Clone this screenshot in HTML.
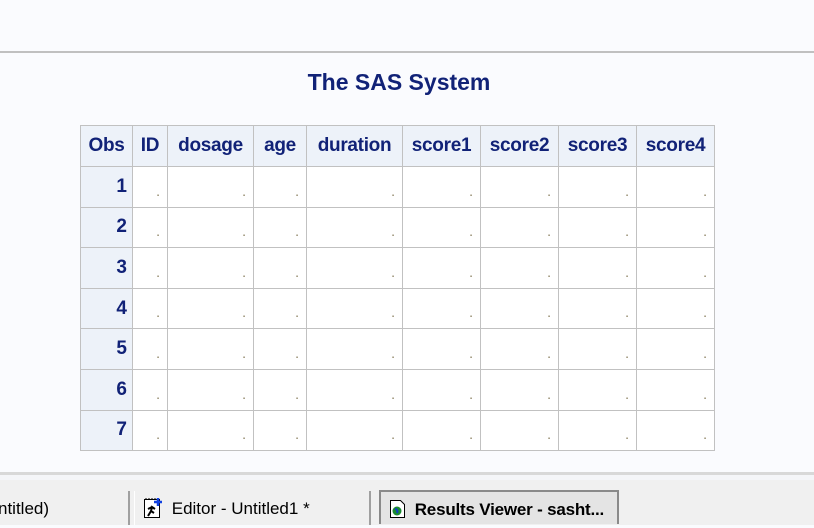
<!DOCTYPE html>
<html><head><style>
body{margin:0;width:814px;height:525px;background:#fafbfe;font-family:"Liberation Sans",Arial,sans-serif;position:relative;overflow:hidden}
.hl{position:absolute;left:0;width:814px;top:51px;height:2px;background:#c0c0c0}
.title{position:absolute;left:0;width:798px;top:69px;text-align:center;color:#112277;font-weight:bold;font-size:23px}
table{position:absolute;left:80px;top:125px;border-collapse:collapse;table-layout:fixed}
td,th{border:1px solid #c1c1c1;padding:0 5px;}
th{background:#edf2f9;color:#112277;font-size:19px;font-weight:bold;height:40px;text-align:center;letter-spacing:-0.3px}
td{height:40.6px;background:#fff;text-align:right;vertical-align:bottom;color:#8a8060;font-size:14px;padding-bottom:8px;padding-right:7px;box-sizing:border-box}
td.o{background:#edf2f9;color:#112277;font-size:19px;font-weight:bold;vertical-align:middle;padding-bottom:0;padding-right:5px}
.b1{position:absolute;left:0;top:472px;width:814px;height:3px;background:#d8d8d8}
.b2{position:absolute;left:0;top:475px;width:814px;height:5px;background:#f4f5f8}
.bar{position:absolute;left:0;top:480px;width:814px;height:45px;background:#f0f0f0}
.tab{position:absolute;top:491px;height:34px;font-size:17px;color:#000;line-height:36px}
</style></head><body>
<div class="hl"></div>
<div class="title">The SAS System</div>
<table>
<colgroup><col style="width:52px"><col style="width:35px"><col style="width:86px"><col style="width:53px"><col style="width:96px"><col style="width:78px"><col style="width:78px"><col style="width:78px"><col style="width:78px"></colgroup>
<tr><th>Obs</th><th>ID</th><th>dosage</th><th>age</th><th>duration</th><th>score1</th><th>score2</th><th>score3</th><th>score4</th></tr>
<tr><td class="o">1</td><td>.</td><td>.</td><td>.</td><td>.</td><td>.</td><td>.</td><td>.</td><td>.</td></tr>
<tr><td class="o">2</td><td>.</td><td>.</td><td>.</td><td>.</td><td>.</td><td>.</td><td>.</td><td>.</td></tr>
<tr><td class="o">3</td><td>.</td><td>.</td><td>.</td><td>.</td><td>.</td><td>.</td><td>.</td><td>.</td></tr>
<tr><td class="o">4</td><td>.</td><td>.</td><td>.</td><td>.</td><td>.</td><td>.</td><td>.</td><td>.</td></tr>
<tr><td class="o">5</td><td>.</td><td>.</td><td>.</td><td>.</td><td>.</td><td>.</td><td>.</td><td>.</td></tr>
<tr><td class="o">6</td><td>.</td><td>.</td><td>.</td><td>.</td><td>.</td><td>.</td><td>.</td><td>.</td></tr>
<tr><td class="o">7</td><td>.</td><td>.</td><td>.</td><td>.</td><td>.</td><td>.</td><td>.</td><td>.</td></tr>
</table>
<div class="b1"></div><div class="b2"></div>
<div class="bar"></div>
<div class="tab" style="left:-2px;width:130px;border-right:2px solid #a0a0a0">ntitled)</div>
<div class="tab" style="left:134px;width:237px;border-left:1px solid #fff;border-right:2px solid #a0a0a0;padding-left:8px;box-sizing:border-box">
<svg width="20" height="22" viewBox="0 0 20 22" style="vertical-align:-5px"><rect x="1.5" y="2.5" width="15" height="18" fill="#fff" stroke="#000"/><path d="M3 2v-1M6 2v-1M9 2v-1M12 2v-1" stroke="#000"/><path d="M5 19l3-5 3 2M8 14l1-4 3 2M5 12l4-2" stroke="#000" stroke-width="2" fill="none"/><path d="M15 1v8M11 5h8" stroke="#1040e0" stroke-width="2.5"/></svg>
<span style="margin-left:4px">Editor - Untitled1 *</span></div>
<div class="tab" style="left:379px;width:240px;top:490px;background:#e4e4e4;border:2px solid #8a8a8a;border-bottom:none;padding-left:8px;box-sizing:border-box;font-weight:bold;line-height:36px">
<svg width="18" height="20" viewBox="0 0 18 20" style="vertical-align:-4px"><path d="M1.5 1.5h10l4 4v13h-14z" fill="#fff" stroke="#000"/><circle cx="8" cy="12" r="4.5" fill="#1a8a30"/><path d="M6 10c2 0 3 2 2 4" stroke="#1040c0" stroke-width="2" fill="none"/></svg>
<span style="margin-left:3px;letter-spacing:-0.2px">Results Viewer - sasht...</span></div>
</body></html>
